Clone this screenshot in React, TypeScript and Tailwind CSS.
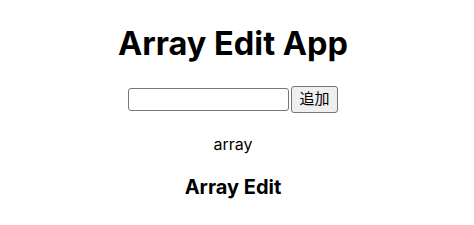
import { useState } from 'react';

export default function App() {
  const [text, setText] = useState('');

  return (
    <div className="text-center text-black pr-[8px]" style={{ fontFamily: 'Inter, "Noto Sans CJK JP", sans-serif' }}>
      <h1 className="text-[32.5px] font-bold leading-[40px] pt-[24px] mb-[22px]">Array Edit App</h1>
      <div className="flex justify-center items-center">
        <input
          type="text"
          value={text}
          onChange={(e) => setText(e.target.value)}
          className="w-[161px] h-[23px] border border-[#767676] rounded-[3px] px-1 text-[13px]"
        />
        <button
          type="button"
          className="ml-[2px] w-[47px] h-[27px] text-[15px] bg-[#efefef] border border-[#767676] rounded-[3px]"
        >
          追加
        </button>
      </div>
      <p className="mt-[22px] text-[16px] leading-[19px]">array</p>
      <h3 className="mt-[21px] text-[20px] font-bold leading-[24px]">Array Edit</h3>
    </div>
  );
}
